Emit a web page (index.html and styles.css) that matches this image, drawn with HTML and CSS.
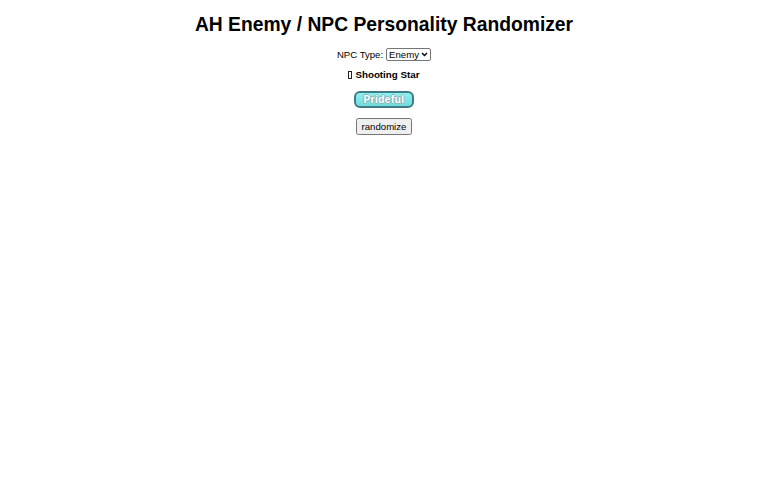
FILE: index.html
```html
<!DOCTYPE html>
<html>
<head>
<meta charset="utf-8">
<title>AH Enemy / NPC Personality Randomizer</title>
<link rel="stylesheet" href="styles.css">
</head>
<body>
<main class="app">
  <h1 class="title">AH Enemy / NPC Personality Randomizer</h1>
  <div class="type-row">
    <label for="npc-type">NPC Type:</label>
    <span class="select-wrap">
      <select id="npc-type" class="type-select">
        <option>Enemy</option>
        <option>NPC</option>
      </select>
      <svg class="chevron" width="7" height="5" viewBox="0 0 7 5"><path d="M1 1 L3.5 3.5 L6 1" fill="none" stroke="#000" stroke-width="1.4"/></svg>
    </span>
  </div>
  <div class="result-name"><span class="glyph-box"></span>Shooting Star</div>
  <div class="trait-row"><span class="trait">Prideful</span></div>
  <div class="action-row"><button class="randomize">randomize</button></div>
</main>
</body>
</html>
```
FILE: styles.css
```css
html, body {
  margin: 0;
  padding: 0;
  background: #fff;
}
body {
  font-family: "Liberation Sans", Arial, sans-serif;
  color: #000;
}
.app {
  display: flex;
  flex-direction: column;
  align-items: center;
  padding-top: 14px;
}
.title {
  margin: 0;
  font-size: 19.3px;
  font-weight: bold;
  line-height: 22px;
}
.type-row {
  margin-top: 12px;
  font-size: 9.6px;
  display: flex;
  align-items: center;
  gap: 3px;
}
.select-wrap {
  position: relative;
  display: inline-flex;
}
.type-select {
  appearance: none;
  -webkit-appearance: none;
  font-family: "Liberation Sans", Arial, sans-serif;
  font-size: 9.6px;
  color: #000;
  background: #fff;
  width: 45px;
  height: 13px;
  padding: 0 10px 0 2px;
  border: 1px solid #767676;
  border-radius: 2px;
  line-height: 11px;
}
.chevron {
  position: absolute;
  right: 3px;
  top: 4px;
  pointer-events: none;
}
.result-name {
  margin-top: 8px;
  font-size: 9.8px;
  font-weight: bold;
  display: flex;
  align-items: center;
}
.glyph-box {
  display: inline-block;
  width: 2px;
  height: 6px;
  border: 1px solid #222;
  margin-right: 3px;
}
.trait-row {
  margin-top: 9px;
}
.trait {
  display: inline-block;
  box-sizing: border-box;
  width: 60px;
  height: 17px;
  line-height: 13px;
  text-align: center;
  font-size: 10px;
  font-weight: bold;
  color: #fff;
  background: linear-gradient(#8ff0f0, #74dcdc);
  border: 2px solid #3d7c86;
  border-radius: 6px;
  text-shadow: -1px 0 #8ab4ba, 1px 0 #8ab4ba, 0 -1px #8ab4ba, 0 1px #8ab4ba;
  letter-spacing: 0.5px;
}
.action-row {
  margin-top: 8px;
}
.randomize {
  font-family: "Liberation Sans", Arial, sans-serif;
  font-size: 9.6px;
  padding: 1px 4px;
  line-height: 11px;
}
```
